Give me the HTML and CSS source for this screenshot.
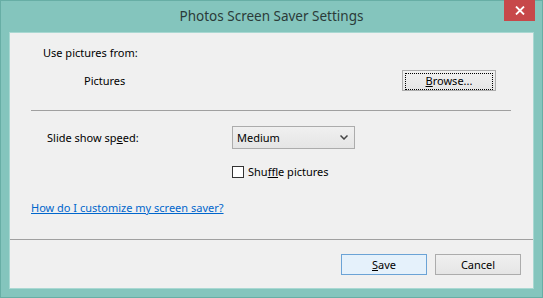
FILE: index.html
```html
<!DOCTYPE html>
<html lang="en">
<head>
<meta charset="UTF-8">
<title>Photos Screen Saver Settings</title>
<link rel="stylesheet" href="styles.css">
</head>
<body>
<div class="window">
  <div class="titlebar">
    <div class="title">Photos Screen Saver Settings</div>
    <div class="close">
      <svg width="10" height="9" viewBox="0 0 10 9"><path d="M1 0.5 L9 8.5 M9 0.5 L1 8.5" stroke="#fff" stroke-width="1.8"/></svg>
    </div>
  </div>
  <div class="client">
    <div class="content">
      <div class="label-from">Use pictures from:</div>
      <div class="source-row">
        <div class="source">Pictures</div>
        <button class="btn browse"><span class="focus"><u>B</u>rowse...</span></button>
      </div>
      <div class="sep"></div>
      <div class="speed-row">
        <div class="speed-label">Slide show sp<u>e</u>ed:</div>
        <div class="select">
          <span>Medium</span>
          <svg width="8" height="5" viewBox="0 0 8 5"><path d="M0.5 0.5 L4 4 L7.5 0.5" fill="none" stroke="#444" stroke-width="1.5"/></svg>
        </div>
      </div>
      <div class="shuffle-row">
        <span class="check"></span>
        <span>Shu<u>f</u>fle pictures</span>
      </div>
      <a class="help" href="#">How do I customize my screen saver?</a>
    </div>
    <div class="footer">
      <button class="btn primary"><u>S</u>ave</button>
      <button class="btn">Cancel</button>
    </div>
  </div>
</div>
</body>
</html>
```

FILE: styles.css
```css
html, body {
  margin: 0;
  height: 100%;
}
body {
  background: #84c5bd;
  font-family: "Noto Sans", "Open Sans", sans-serif;
  font-size: 11px;
  color: #000;
}
.window {
  height: 298px;
  box-sizing: border-box;
  border: 1px solid #67aea5;
  display: flex;
  flex-direction: column;
  padding: 0 8px 8px 8px;
}
.titlebar {
  height: 31px;
  display: flex;
  justify-content: center;
  align-items: center;
  position: relative;
}
.title {
  font-size: 13.5px;
  color: #2b3b39;
  margin-top: -1px;
}
.close {
  position: absolute;
  right: -1px;
  top: -1px;
  width: 31px;
  height: 21px;
  background: #c7484a;
  display: flex;
  justify-content: center;
  align-items: center;
}
.client {
  flex: 1;
  background: #f0f0f0;
  border: 1px solid #a9d8d2;
  display: flex;
  flex-direction: column;
}
.content {
  padding: 12px 22px 0 21px;
  height: 207px;
  box-sizing: border-box;
  border-bottom: 1px solid #a0a0a0;
}
.label-from {
  padding-left: 12px;
  height: 18px;
}
.source-row {
  display: flex;
  align-items: center;
  justify-content: space-between;
  margin-top: 7px;
}
.source {
  padding-left: 53px;
}
.btn {
  font: inherit;
  color: #000;
  background: linear-gradient(#f0f0f0, #e5e5e5);
  border: 1px solid #acacac;
  padding: 0;
  height: 21px;
  width: 86px;
}
.browse {
  width: 94px;
  margin-right: 15px;
  padding: 2px;
}
.focus {
  display: block;
  height: 15px;
  line-height: 14px;
  border: 1px dotted #000;
}
.sep {
  border-top: 1px solid #a0a0a0;
  margin-top: 19px;
}
.speed-row {
  display: flex;
  align-items: center;
  margin-top: 15px;
}
.speed-label {
  padding-left: 16px;
  width: 185px;
}
.select {
  box-sizing: border-box;
  width: 123px;
  height: 23px;
  border: 1px solid #acacac;
  background: linear-gradient(#f0f0f0, #e5e5e5);
  display: flex;
  align-items: center;
  justify-content: space-between;
  padding: 0 6px 0 4px;
}
.shuffle-row {
  display: flex;
  align-items: center;
  margin: 15px 0 0 201px;
  gap: 4px;
}
.check {
  width: 10px;
  height: 10px;
  border: 1px solid #333;
  background: #fff;
}
.help {
  display: inline-block;
  margin-top: 21px;
  color: #0066cc;
}
.footer {
  flex: 1;
  display: flex;
  justify-content: flex-end;
  align-items: center;
  gap: 8px;
  padding-right: 12px;
}
.btn.primary {
  background: #e5f1fb;
  border-color: #6ba3d6;
}
```
